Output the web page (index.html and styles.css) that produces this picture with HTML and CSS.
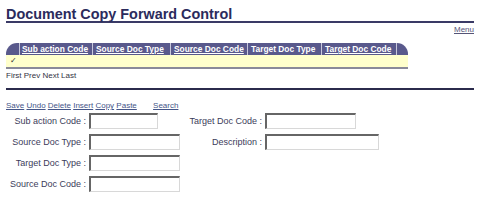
FILE: index.html
```html
<!DOCTYPE html>
<html lang="en">
<head>
    <title>Document Copy Forward Control</title>
    <link rel="stylesheet" href="styles.css">
</head>
<body>
    <div class="page">
        <h1 class="title">Document Copy Forward Control</h1>
        <div class="menuRow"><a href="#" class="menuLink">Menu</a></div>

        <div class="grid">
            <div class="gridHead">
                <span class="tab tabLeft"></span>
                <a href="#" class="col">Sub action Code</a>
                <a href="#" class="col">Source Doc Type</a>
                <a href="#" class="col">Source Doc Code</a>
                <span class="col plain">Target Doc Type</span>
                <a href="#" class="col">Target Doc Code</a>
                <span class="tab tabRight"></span>
            </div>
            <div class="gridRow"><span class="check">&#10003;</span></div>
        </div>
        <div class="pager">First Prev Next Last</div>

        <div class="tools">
            <a href="#">Save</a> <a href="#">Undo</a> <a href="#">Delete</a> <a href="#">Insert</a> <a href="#">Copy</a> <a href="#">Paste</a>
            <a href="#" class="search">Search</a>
        </div>

        <div class="form">
            <label class="lbl">Sub action Code :</label>
            <input class="fld short" type="text">
            <label class="lbl">Target Doc Code :</label>
            <input class="fld" type="text">

            <label class="lbl">Source Doc Type :</label>
            <input class="fld" type="text">
            <label class="lbl">Description :</label>
            <input class="fld wide" type="text">

            <label class="lbl">Target Doc Type :</label>
            <input class="fld" type="text">
            <span></span><span></span>

            <label class="lbl">Source Doc Code :</label>
            <input class="fld" type="text">
        </div>
    </div>
</body>
</html>
```

FILE: styles.css
```css
*{
    margin:0;
    padding:0;
    box-sizing:border-box;
}
body{
    background:#fff;
    font-family:"Liberation Sans", Arial, sans-serif;
    color:#333355;
}
.page{
    width:480px;
    height:200px;
    padding:0 6px;
}
.title{
    font-size:14.4px;
    font-weight:bold;
    color:#2b2b5c;
    padding-top:6px;
    height:23px;
    line-height:16px;
    border-bottom:2px solid #3a3a66;
}
.menuRow{
    display:flex;
    justify-content:flex-end;
    height:20px;
}
.menuLink{
    font-size:8px;
    color:#555577;
    margin-top:2px;
}
/* result grid */
.grid{
    width:402px;
}
.gridHead{
    display:flex;
    height:12px;
    background:#59598c;
    border-radius:11px 11px 0 0;
}
.tab{
    width:13px;
}
.col{
    color:#fff;
    font-size:8.4px;
    font-weight:bold;
    line-height:12px;
    padding:0 3px;
    border-right:1px solid #c8c8dc;
    white-space:nowrap;
}
.col:first-of-type{
    border-left:1px solid #c8c8dc;
}
.col:nth-child(2){ width:74px; padding-left:2px;}
.col:nth-child(3){ width:78px;}
.col:nth-child(4){ width:77px;}
.col:nth-child(5){ width:74px;}
.col:nth-child(6){ width:75px;}
.plain{
    text-decoration:none;
}
.tabRight{
    flex:1;
}
.gridRow{
    height:14px;
    background:#ffffcc;
    border-bottom:2px solid #8a8a99;
    padding-left:4px;
    display:flex;
    align-items:center;
}
.check{
    font-size:8px;
    line-height:10px;
    color:#333;
}
.pager{
    font-size:8px;
    color:#333344;
    margin-top:2px;
    height:19px;
    border-bottom:2px solid #2b2b4c;
}
.tools{
    margin-top:11px;
    font-size:8px;
    height:12px;
}
.tools a{
    color:#445588;
}
.tools .search{
    margin-left:14px;
}
.form{
    display:grid;
    grid-template-columns:83px 92px 84px auto;
    grid-auto-rows:16px;
    row-gap:5px;
}
.lbl{
    font-size:9px;
    color:#3c3c5a;
    text-align:right;
    padding-right:3px;
    line-height:16px;
}
.fld{
    width:91px;
    height:16px;
    border:1px solid #d8d8d8;
    border-top:2px solid #666;
    border-left:2px solid #666;
    background:#fff;
}
.short{ width:69px;}
.wide{ width:114px;}
```
